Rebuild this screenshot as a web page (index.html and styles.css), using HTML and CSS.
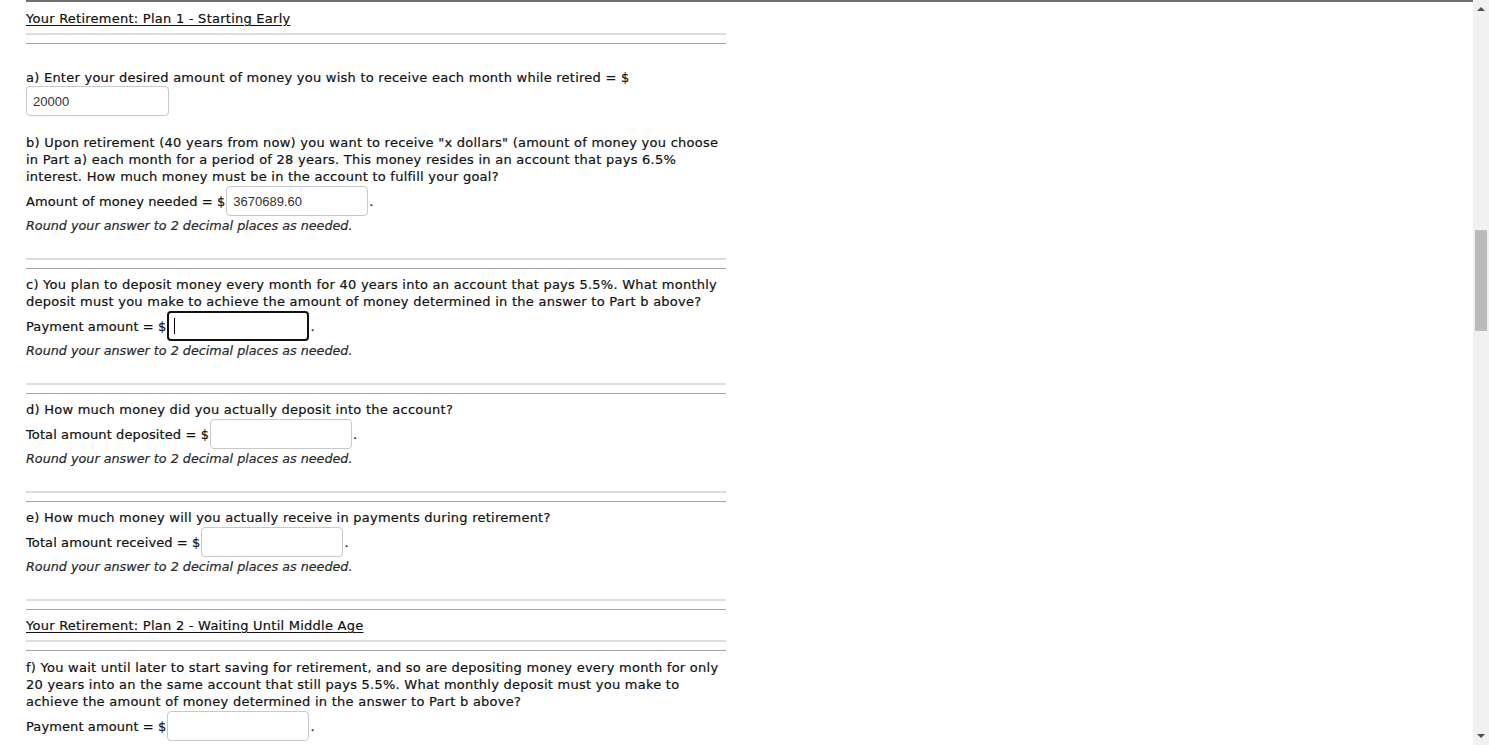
FILE: index.html
```html
<!DOCTYPE html>
<html>
<head>
<meta charset="utf-8">
<link rel="stylesheet" href="styles.css">
</head>
<body>
<div class="frame">
  <div class="page">
    <div class="topline"></div>
    <div class="content">
      <div class="title">Your Retirement: Plan 1 - Starting Early</div>
      <div class="rule rule-title"></div>

      <div class="part part-a">
        <div class="q">a) Enter your desired amount of money you wish to receive each month while retired = $</div>
        <div class="row"><input class="field field-wide" type="text" value="20000"></div>
      </div>

      <div class="part part-b">
        <div class="q">b) Upon retirement (40 years from now) you want to receive "x dollars" (amount of money you choose in Part a) each month for a period of 28 years. This money resides in an account that pays 6.5% interest. How much money must be in the account to fulfill your goal?</div>
        <div class="row"><span class="label">Amount of money needed = $</span><input class="field" type="text" value="3670689.60"><span class="dot">.</span></div>
        <div class="note">Round your answer to 2 decimal places as needed.</div>
      </div>
      <div class="rule"></div>

      <div class="part">
        <div class="q">c) You plan to deposit money every month for 40 years into an account that pays 5.5%. What monthly deposit must you make to achieve the amount of money determined in the answer to Part b above?</div>
        <div class="row"><span class="label">Payment amount = $</span><span class="focus-wrap"><input class="field focused" type="text" value=""><span class="caret"></span></span><span class="dot">.</span></div>
        <div class="note">Round your answer to 2 decimal places as needed.</div>
      </div>
      <div class="rule"></div>

      <div class="part">
        <div class="q">d) How much money did you actually deposit into the account?</div>
        <div class="row"><span class="label">Total amount deposited = $</span><input class="field" type="text" value=""><span class="dot">.</span></div>
        <div class="note">Round your answer to 2 decimal places as needed.</div>
      </div>
      <div class="rule"></div>

      <div class="part">
        <div class="q">e) How much money will you actually receive in payments during retirement?</div>
        <div class="row"><span class="label">Total amount received = $</span><input class="field" type="text" value=""><span class="dot">.</span></div>
        <div class="note">Round your answer to 2 decimal places as needed.</div>
      </div>
      <div class="rule"></div>

      <div class="title">Your Retirement: Plan 2 - Waiting Until Middle Age</div>
      <div class="rule rule-title"></div>

      <div class="part part-f">
        <div class="q">f) You wait until later to start saving for retirement, and so are depositing money every month for only 20 years into an the same account that still pays 5.5%. What monthly deposit must you make to achieve the amount of money determined in the answer to Part b above?</div>
        <div class="row"><span class="label">Payment amount = $</span><input class="field" type="text" value=""><span class="dot">.</span></div>
        <div class="note">Round your answer to 2 decimal places as needed.</div>
      </div>
    </div>
  </div>
  <div class="scrollbar">
    <div class="arrow arrow-up"></div>
    <div class="track"><div class="thumb"></div></div>
    <div class="arrow arrow-down"></div>
  </div>
</div>
</body>
</html>
```

FILE: styles.css
```css
html, body {
  margin: 0;
  padding: 0;
  height: 100%;
  background: #fff;
}
body {
  font-family: "DejaVu Sans", Verdana, sans-serif;
  font-size: 13px;
  letter-spacing: 0.25px;
  line-height: 17px;
  color: #111;
}
.content .q,
.content .title,
.content .label,
.content .dot,
.content .note {
  -webkit-text-stroke: 0.2px currentColor;
}
.frame {
  display: flex;
  height: 745px;
  overflow: hidden;
}
.page {
  flex: 1;
  overflow: hidden;
}
.topline {
  margin-left: 26px;
  height: 2px;
  background: #707070;
}
.content {
  width: 700px;
  margin-left: 26px;
  padding-top: 8px;
}
.title {
  text-decoration: underline;
  text-underline-offset: 2px;
  height: 17px;
}
.rule {
  margin-top: 24px;
  border-top: 2px solid #dedede;
  height: 8px;
  border-bottom: 1px solid #a3a3a3;
  margin-bottom: 7px;
}
.rule-title {
  margin-top: 6px;
}
.part-a {
  margin-top: 25px;
}
.part-a .row {
  height: 30px;
  align-items: flex-start;
}
.part-b {
  margin-top: 18px;
}
.part-f {
  margin-top: 8px;
}
.row {
  display: flex;
  align-items: center;
  height: 32px;
}
.label {
  letter-spacing: 0.1px;
}
.field {
  box-sizing: border-box;
  width: 142px;
  height: 30px;
  border: 1px solid #c8c8c8;
  border-radius: 4px;
  padding: 0 6px;
  margin: 0 0 0 1px;
  font-family: "Liberation Sans", Arial, sans-serif;
  font-size: 13px;
  letter-spacing: 0;
  color: #333;
  background: #fff;
  outline: none;
}
.field-wide {
  width: 143px;
  margin-left: 0;
}
.focus-wrap {
  position: relative;
  display: flex;
}
.focused {
  border: 2px solid #111;
  border-radius: 4px;
}
.caret {
  position: absolute;
  left: 8px;
  top: 7px;
  width: 1px;
  height: 16px;
  background: #000;
}
.dot {
  margin-left: 1px;
}
.note {
  font-style: italic;
  font-size: 12.75px;
  letter-spacing: 0;
  color: #2a2a2a;
}
.scrollbar {
  width: 16px;
  flex: none;
  background: #f1f1f1;
  display: flex;
  flex-direction: column;
  align-items: center;
}
.arrow {
  width: 0;
  height: 0;
  border-left: 4px solid transparent;
  border-right: 4px solid transparent;
}
.arrow-up {
  margin-top: 7px;
  border-bottom: 4px solid #505050;
}
.arrow-down {
  margin-bottom: 7px;
  border-top: 4px solid #505050;
}
.track {
  flex: 1;
  width: 100%;
}
.thumb {
  margin-top: 219px;
  margin-left: 2px;
  width: 12px;
  height: 101px;
  background: #bcbcbc;
}
```
